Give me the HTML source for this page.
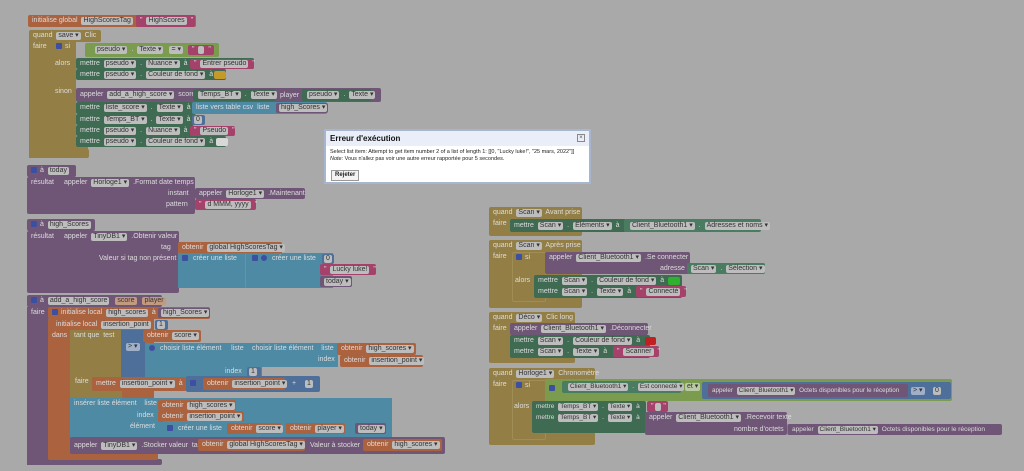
<!DOCTYPE html><html><head><meta charset="utf-8"><style>
body{margin:0;width:1024px;height:471px;background:#a9a9a9;position:relative;overflow:hidden;font-family:"Liberation Sans",sans-serif}
.r{position:absolute;box-sizing:border-box;font-size:7px;line-height:11px;color:#dcdcdc;white-space:nowrap;padding-left:4px;border-radius:2px}
.go{background:#937f45}.dg{background:#3f6b52}.lg{background:#7b9b4f}.pu{background:#6f5677}.pk{background:#a5426b}.or{background:#aa623f}.te{background:#4f8aa5}.bl{background:#4e6f9a}
.t{position:absolute;font-size:7px;line-height:11px;color:#dcdcdc;white-space:nowrap}
.p{background:#bdbdbd;color:#333;border-radius:2px;padding:0 2px;line-height:8px;display:inline-block;margin:0 2px}
.g{display:inline-block;width:6px;height:6px;background:#3d4fa0;border-radius:1px;vertical-align:middle;margin-right:3px}
</style></head><body>
<div class="r or" style="left:28px;top:15px;width:168px;height:12px">initialise global <span class="p">HighScoresTag</span> à</div>
<div class="r pk" style="left:136px;top:15px;width:59px;height:12px">" <span class="p">HighScores</span> "</div>

<div class="r go" style="left:29px;top:30px;width:72px;height:12px">quand <span class="p">save ▾</span> Clic</div>
<div class="r go" style="left:29px;top:41px;width:23px;height:117px;border-radius:0">faire</div>
<div class="r go" style="left:29px;top:149px;width:60px;height:9px"></div>
<div class="r go" style="left:52px;top:41px;width:24px;height:110px;border-radius:0"><span class="g"></span>si</div>
<div class="t" style="left:55px;top:58px">alors</div><div class="t" style="left:55px;top:86px">sinon</div>
<div class="r go" style="left:52px;top:146px;width:36px;height:6px"></div>
<div class="r lg" style="left:85px;top:43px;width:134px;height:14px;line-height:14px;padding-left:8px"><span class="p">pseudo ▾</span> . <span class="p">Texte ▾</span> <span class="p">= ▾</span></div>
<div class="r pk" style="left:188px;top:45px;width:26px;height:10px;line-height:10px">" <span class="p">&nbsp;</span> "</div>
<div class="r dg" style="left:76px;top:58px;width:178px;height:11px">mettre <span class="p">pseudo ▾</span> . <span class="p">Nuance ▾</span> à</div>
<div class="r pk" style="left:190px;top:59px;width:64px;height:10px;line-height:10px">" <span class="p">Entrer pseudo</span> "</div>
<div class="r dg" style="left:76px;top:69px;width:150px;height:11px">mettre <span class="p">pseudo ▾</span> . <span class="p">Couleur de fond ▾</span> à</div>
<div class="r" style="left:214px;top:71px;width:12px;height:8px;background:#c49a2a"></div>
<div class="r pu" style="left:76px;top:88px;width:305px;height:14px;line-height:14px">appeler <span class="p">add_a_high_score ▾</span> score</div>
<div class="r dg" style="left:193px;top:89px;width:82px;height:12px;padding-left:3px"><span class="p">Temps_BT ▾</span> . <span class="p">Texte ▾</span></div>
<div class="t" style="left:280px;top:90px">player</div>
<div class="r dg" style="left:302px;top:89px;width:69px;height:12px;padding-left:3px"><span class="p">pseudo ▾</span> . <span class="p">Texte ▾</span></div>
<div class="r dg" style="left:76px;top:102px;width:120px;height:12px">mettre <span class="p">liste_score ▾</span> . <span class="p">Texte ▾</span> à</div>
<div class="r te" style="left:192px;top:102px;width:135px;height:12px">liste vers table csv &nbsp;liste</div>
<div class="r pu" style="left:276px;top:103px;width:52px;height:10px;line-height:10px;padding-left:1px"><span class="p">high_Scores ▾</span></div>
<div class="r dg" style="left:76px;top:114px;width:120px;height:11px">mettre <span class="p">Temps_BT ▾</span> . <span class="p">Texte ▾</span> à</div>
<div class="r bl" style="left:192px;top:115px;width:13px;height:10px;line-height:10px;padding-left:2px"><span class="p" style="margin:0">0</span></div>
<div class="r dg" style="left:76px;top:125px;width:118px;height:11px">mettre <span class="p">pseudo ▾</span> . <span class="p">Nuance ▾</span> à</div>
<div class="r pk" style="left:190px;top:126px;width:45px;height:10px;line-height:10px">" <span class="p">Pseudo</span> "</div>
<div class="r dg" style="left:76px;top:136px;width:150px;height:11px">mettre <span class="p">pseudo ▾</span> . <span class="p">Couleur de fond ▾</span> à</div>
<div class="r" style="left:216px;top:138px;width:12px;height:8px;background:#d8d8d8"></div>

<div class="r pu" style="left:27px;top:165px;width:49px;height:12px"><span class="g"></span>à <span class="p">today</span></div>
<div class="r pu" style="left:27px;top:177px;width:168px;height:37px">résultat</div>
<div class="r pu" style="left:60px;top:177px;width:135px;height:33px">appeler <span class="p">Horloge1 ▾</span> .Format date temps</div>
<div class="t" style="left:168px;top:188px">instant</div><div class="t" style="left:166px;top:199px">pattern</div>
<div class="r pu" style="left:195px;top:188px;width:110px;height:11px">appeler <span class="p">Horloge1 ▾</span> .Maintenant</div>
<div class="r pk" style="left:195px;top:199px;width:61px;height:11px">" <span class="p">d MMM, yyyy</span> "</div>

<div class="r pu" style="left:27px;top:219px;width:68px;height:12px"><span class="g"></span>à <span class="p">high_Scores</span></div>
<div class="r pu" style="left:27px;top:231px;width:152px;height:62px">résultat</div>
<div class="r pu" style="left:60px;top:231px;width:119px;height:57px">appeler <span class="p">TinyDB1 ▾</span> .Obtenir valeur</div>
<div class="t" style="left:161px;top:242px">tag</div><div class="t" style="left:99px;top:253px">Valeur si tag non présent</div>
<div class="r or" style="left:178px;top:242px;width:104px;height:12px">obtenir <span class="p">global HighScoresTag ▾</span></div>
<div class="r te" style="left:178px;top:253px;width:155px;height:35px;border-radius:0"><span class="g"></span> créer une liste</div>
<div class="r te" style="left:245px;top:253px;width:88px;height:35px;padding-left:6px;border-left:1px solid #5a97b2"><span class="g"></span><span class="g" style="border-radius:4px"></span> créer une liste</div>
<div class="r bl" style="left:322px;top:254px;width:12px;height:10px;line-height:10px;padding-left:2px"><span class="p" style="margin:0">0</span></div>
<div class="r pk" style="left:320px;top:264px;width:56px;height:11px">" <span class="p">Lucky luke!</span> "</div>
<div class="r pu" style="left:320px;top:276px;width:32px;height:11px;padding-left:2px"><span class="p">today ▾</span></div>

<div class="r pu" style="left:27px;top:295px;width:135px;height:12px"><span class="g"></span>à <span class="p">add_a_high_score</span> <span class="p" style="background:#c29a80">score</span> <span class="p" style="background:#c29a80">player</span></div>
<div class="r pu" style="left:27px;top:307px;width:22px;height:158px;border-radius:0">faire</div>
<div class="r pu" style="left:27px;top:459px;width:135px;height:6px"></div>
<div class="r or" style="left:48px;top:307px;width:162px;height:12px"><span class="g"></span>initialise local <span class="p">high_scores</span> à</div>
<div class="r pu" style="left:158px;top:308px;width:52px;height:10px;line-height:10px;padding-left:1px"><span class="p">high_Scores ▾</span></div>
<div class="r or" style="left:48px;top:319px;width:106px;height:140px;border-radius:0;padding-left:8px">initialise local <span class="p">insertion_point</span> à</div>
<div class="t" style="left:52px;top:330px">dans</div>
<div class="r or" style="left:48px;top:453px;width:110px;height:7px"></div>
<div class="r bl" style="left:155px;top:320px;width:13px;height:10px;line-height:10px;padding-left:2px"><span class="p" style="margin:0">1</span></div>
<div class="r go" style="left:70px;top:330px;width:52px;height:68px;border-radius:0">tant que &nbsp;test</div>
<div class="t" style="left:75px;top:376px">faire</div>
<div class="r bl" style="left:121px;top:330px;width:24px;height:48px;border-radius:0;padding:11px 0 0 3px"><span class="p" style="background:#9fb0c8">&gt; ▾</span></div>
<div class="r or" style="left:143px;top:330px;width:58px;height:12px">obtenir <span class="p">score ▾</span></div>
<div class="r te" style="left:145px;top:343px;width:117px;height:35px;border-radius:0"><span class="g" style="border-radius:4px"></span> choisir liste élément &nbsp;&nbsp;&nbsp; liste</div>
<div class="r te" style="left:248px;top:343px;width:90px;height:24px;border-radius:0">choisir liste élément &nbsp;&nbsp; liste</div>
<div class="t" style="left:318px;top:354px">index</div><div class="t" style="left:225px;top:366px">index</div>
<div class="r or" style="left:337px;top:343px;width:79px;height:12px">obtenir <span class="p">high_scores ▾</span></div>
<div class="r or" style="left:340px;top:355px;width:83px;height:12px">obtenir <span class="p">insertion_point ▾</span></div>
<div class="r bl" style="left:247px;top:367px;width:14px;height:10px;line-height:10px;padding-left:2px"><span class="p" style="margin:0">1</span></div>
<div class="r or" style="left:92px;top:377px;width:95px;height:14px;line-height:14px">mettre <span class="p">insertion_point ▾</span> à</div>
<div class="r bl" style="left:186px;top:376px;width:134px;height:16px;line-height:16px;padding-left:4px"><span class="g"></span></div>
<div class="r or" style="left:203px;top:378px;width:82px;height:12px">obtenir <span class="p">insertion_point ▾</span></div>
<div class="t" style="left:292px;top:378px">+</div>
<div class="r bl" style="left:303px;top:379px;width:12px;height:10px;line-height:10px;padding-left:2px"><span class="p" style="margin:0">1</span></div>
<div class="r te" style="left:70px;top:398px;width:322px;height:40px;border-radius:0">insérer liste élément &nbsp;&nbsp;&nbsp;liste</div>
<div class="t" style="left:137px;top:410px">index</div><div class="t" style="left:130px;top:421px">élément</div>
<div class="r or" style="left:158px;top:400px;width:78px;height:11px">obtenir <span class="p">high_scores ▾</span></div>
<div class="r or" style="left:158px;top:411px;width:86px;height:11px">obtenir <span class="p">insertion_point ▾</span></div>
<div class="r te" style="left:163px;top:421px;width:229px;height:15px;line-height:15px"><span class="g"></span> créer une liste</div>
<div class="r or" style="left:227px;top:423px;width:54px;height:11px">obtenir <span class="p">score ▾</span></div>
<div class="r or" style="left:286px;top:423px;width:59px;height:11px">obtenir <span class="p">player ▾</span></div>
<div class="r pu" style="left:355px;top:423px;width:31px;height:11px;padding-left:1px"><span class="p">today ▾</span></div>
<div class="r pu" style="left:70px;top:437px;width:375px;height:17px;line-height:17px">appeler <span class="p">TinyDB1 ▾</span> .Stocker valeur &nbsp;tag</div>
<div class="r or" style="left:198px;top:439px;width:107px;height:12px">obtenir <span class="p">global HighScoresTag ▾</span></div>
<div class="t" style="left:310px;top:440px">Valeur à stocker</div>
<div class="r or" style="left:363px;top:439px;width:79px;height:12px">obtenir <span class="p">high_scores ▾</span></div>

<div style="position:absolute;left:324px;top:129px;width:267px;height:55px;background:#fff;border:2px solid #a8b5cf;box-sizing:border-box">
<div style="background:#e9eef8;height:15px;font:bold 8px/15px 'Liberation Sans';padding-left:4px;color:#111">Erreur d'exécution<span style="position:absolute;right:4px;top:3px;width:6px;height:6px;border:1px solid #888;font:6px/6px sans-serif;text-align:center;color:#555">×</span></div>
<div style="font:5.5px/7px 'Liberation Sans';color:#222;padding:3px 4px 0">Select list item: Attempt to get item number 2 of a list of length 1: [[0, "Lucky luke!", "25 mars, 2022"]]<br><i>Note:</i> Vous n'allez pas voir une autre erreur rapportée pour 5 secondes.</div>
<div style="position:absolute;left:5px;top:39px;border:1px solid #999;background:#f3f3f3;font:bold 6px/9px 'Liberation Sans';padding:0 3px;color:#222">Rejeter</div>
</div>

<div class="r go" style="left:489px;top:207px;width:93px;height:29px">quand <span class="p">Scan ▾</span> Avant prise<br>faire</div>
<div class="r dg" style="left:510px;top:219px;width:116px;height:13px;line-height:13px">mettre <span class="p">Scan ▾</span> . <span class="p">Eléments ▾</span> à</div>
<div class="r dg" style="left:624px;top:219px;width:137px;height:13px;line-height:13px;background:#4a7c62"><span class="p">Client_Bluetooth1 ▾</span> . <span class="p">Adresses et noms ▾</span></div>
<div class="r go" style="left:489px;top:240px;width:93px;height:68px">quand <span class="p">Scan ▾</span> Après prise<br>faire</div>
<div class="r go" style="left:512px;top:252px;width:34px;height:50px;border:1px solid #a08c55;padding-left:3px;line-height:10px"><span class="g"></span>si</div>
<div class="t" style="left:515px;top:275px">alors</div>
<div class="r pu" style="left:545px;top:252px;width:145px;height:22px">appeler <span class="p">Client_Bluetooth1 ▾</span> .Se connecter</div>
<div class="t" style="left:660px;top:263px">adresse</div>
<div class="r dg" style="left:687px;top:263px;width:78px;height:11px;padding-left:2px;background:#4a7c62"><span class="p">Scan ▾</span> . <span class="p">Sélection ▾</span></div>
<div class="r dg" style="left:534px;top:275px;width:148px;height:23px">mettre <span class="p">Scan ▾</span> . <span class="p">Couleur de fond ▾</span> à<br>mettre <span class="p">Scan ▾</span> . <span class="p">Texte ▾</span> à</div>
<div class="r" style="left:668px;top:277px;width:12px;height:8px;background:#2fb030"></div>
<div class="r pk" style="left:636px;top:286px;width:50px;height:11px">" <span class="p">Connecté</span> "</div>
<div class="r go" style="left:489px;top:312px;width:86px;height:51px">quand <span class="p">Déco ▾</span> Clic long<br>faire</div>
<div class="r pu" style="left:510px;top:323px;width:138px;height:12px">appeler <span class="p">Client_Bluetooth1 ▾</span> .Déconnecter</div>
<div class="r dg" style="left:510px;top:335px;width:140px;height:23px">mettre <span class="p">Scan ▾</span> . <span class="p">Couleur de fond ▾</span> à<br>mettre <span class="p">Scan ▾</span> . <span class="p">Texte ▾</span> à</div>
<div class="r" style="left:645px;top:337px;width:11px;height:8px;background:#c02020"></div>
<div class="r pk" style="left:613px;top:346px;width:46px;height:11px">" <span class="p">Scanner</span> "</div>
<div class="r go" style="left:489px;top:368px;width:106px;height:77px">quand <span class="p">Horloge1 ▾</span> Chronomètre<br>faire</div>
<div class="r go" style="left:512px;top:380px;width:34px;height:60px;border:1px solid #a08c55;padding-left:3px;line-height:10px"><span class="g"></span>si</div>
<div class="t" style="left:514px;top:401px">alors</div>
<div class="r lg" style="left:545px;top:379px;width:407px;height:22px;line-height:20px"><span class="g"></span></div>
<div class="r dg" style="left:562px;top:381px;width:119px;height:12px;background:#4a7c62;font-size:6.5px"><span class="p">Client_Bluetooth1 ▾</span> . <span class="p">Est connecté ▾</span></div>
<div class="t" style="left:683px;top:381px"><span class="p" style="background:#b9c9a3">et ▾</span></div>
<div class="r bl" style="left:702px;top:382px;width:249px;height:17px;line-height:17px"></div>
<div class="r pu" style="left:708px;top:384px;width:200px;height:13px;line-height:13px;font-size:6.3px">appeler <span class="p">Client_Bluetooth1 ▾</span> Octets disponibles pour le réception</div>
<div class="t" style="left:909px;top:385px"><span class="p" style="background:#9fb0c8">&gt; ▾</span></div>
<div class="t" style="left:931px;top:385px"><span class="p">0</span></div>
<div class="r dg" style="left:532px;top:401px;width:114px;height:32px;font-size:6.5px">mettre <span class="p">Temps_BT ▾</span> . <span class="p">Texte ▾</span> à<br>mettre <span class="p">Temps_BT ▾</span> . <span class="p">Texte ▾</span> à</div>
<div class="r pk" style="left:647px;top:401px;width:21px;height:11px">" <span class="p" style="margin:0">&nbsp;</span> "</div>
<div class="r pu" style="left:645px;top:412px;width:142px;height:23px">appeler <span class="p">Client_Bluetooth1 ▾</span> .Recevoir texte</div>
<div class="t" style="left:734px;top:424px">nombre d'octets</div>
<div class="r pu" style="left:787px;top:424px;width:215px;height:11px;border-left:1px solid #8a7490;font-size:6.5px">appeler <span class="p">Client_Bluetooth1 ▾</span> Octets disponibles pour le réception</div>
</body></html>
